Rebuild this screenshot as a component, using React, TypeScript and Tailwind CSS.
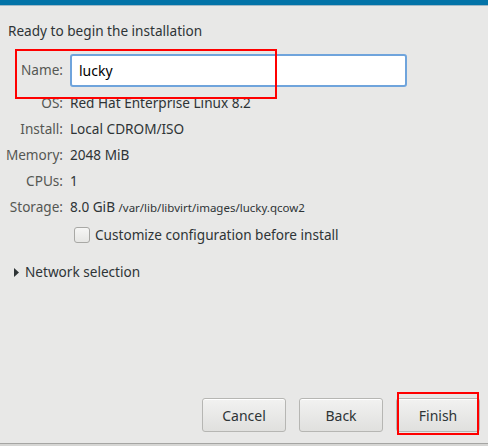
import React from 'react';

const rows: [string, React.ReactNode][] = [
  ['OS:', 'Red Hat Enterprise Linux 8.2'],
  ['Install:', 'Local CDROM/ISO'],
  ['Memory:', '2048 MiB'],
  ['CPUs:', '1'],
  [
    'Storage:',
    <>
      8.0 GiB <span className="text-[11.5px]">/var/lib/libvirt/images/lucky.qcow2</span>
    </>,
  ],
];

const Btn: React.FC<{ label: string }> = ({ label }) => (
  <button className="h-[34px] w-[84px] rounded-[3px] border border-[#b6b6b3] bg-gradient-to-b from-[#f2f2f1] to-[#e0e0de] text-[14px] text-[#2e3436] shadow-[inset_0_1px_0_#ffffff]">
    {label}
  </button>
);

export default function App() {
  return (
    <div
      className="relative flex h-[446px] w-[488px] flex-col bg-[#e8e8e7] text-[#2e3436]"
      style={{ fontFamily: '"Noto Sans", "Open Sans", sans-serif' }}
    >
      <div className="h-[6px] border-b border-[#9fb9c8] bg-[#0273a8]" />

      <div className="pl-2 pt-[15px] text-[13.6px] leading-[20px]">Ready to begin the installation</div>

      <div className="mt-[13px] flex h-[33px] items-center">
        <span className="w-[63px] text-right text-[13.6px] text-[#555753]">Name:</span>
        <div className="ml-[7px] flex h-[33px] w-[337px] items-center rounded-[3px] border-2 border-[#6fa4dc] bg-white pl-[7px] text-[14px] text-black">
          lucky
        </div>
      </div>

      <div className="mt-[3px] flex flex-col">
        {rows.map(([label, value]) => (
          <div key={label} className="flex h-[26px] items-center text-[13.6px]">
            <span className="w-[63px] text-right text-[#555753]">{label}</span>
            <span className="ml-[7px]">{value}</span>
          </div>
        ))}
      </div>

      <div className="ml-[74px] mt-[3px] flex h-[24px] items-center gap-[5px] text-[13.6px]">
        <span className="h-[16px] w-[16px] rounded-[3px] border border-[#a8a8a5] bg-gradient-to-b from-[#f6f6f5] to-[#e6e6e4]" />
        <span>Customize configuration before install</span>
      </div>

      <div className="ml-[14px] mt-[13px] flex h-[24px] items-center gap-[6px] text-[13.6px]">
        <svg width="5" height="9" viewBox="0 0 5 9">
          <path d="M0 0 L5 4.5 L0 9 Z" fill="#2e3436" />
        </svg>
        <span>Network selection</span>
      </div>

      <div className="flex-1" />

      <div className="flex justify-end gap-[13px] pb-[11px] pr-[8px]">
        <Btn label="Cancel" />
        <Btn label="Back" />
        <Btn label="Finish" />
      </div>

      <div className="h-[3px] border-t border-[#a5a5a3] bg-[#d6d6d4]" />

      <div className="pointer-events-none absolute left-[15px] top-[49px] h-[50px] w-[262px] border-2 border-[#ff0000]" />
      <div className="pointer-events-none absolute left-[397px] top-[392px] h-[43px] w-[82px] border-2 border-[#ff0000]" />
    </div>
  );
}
